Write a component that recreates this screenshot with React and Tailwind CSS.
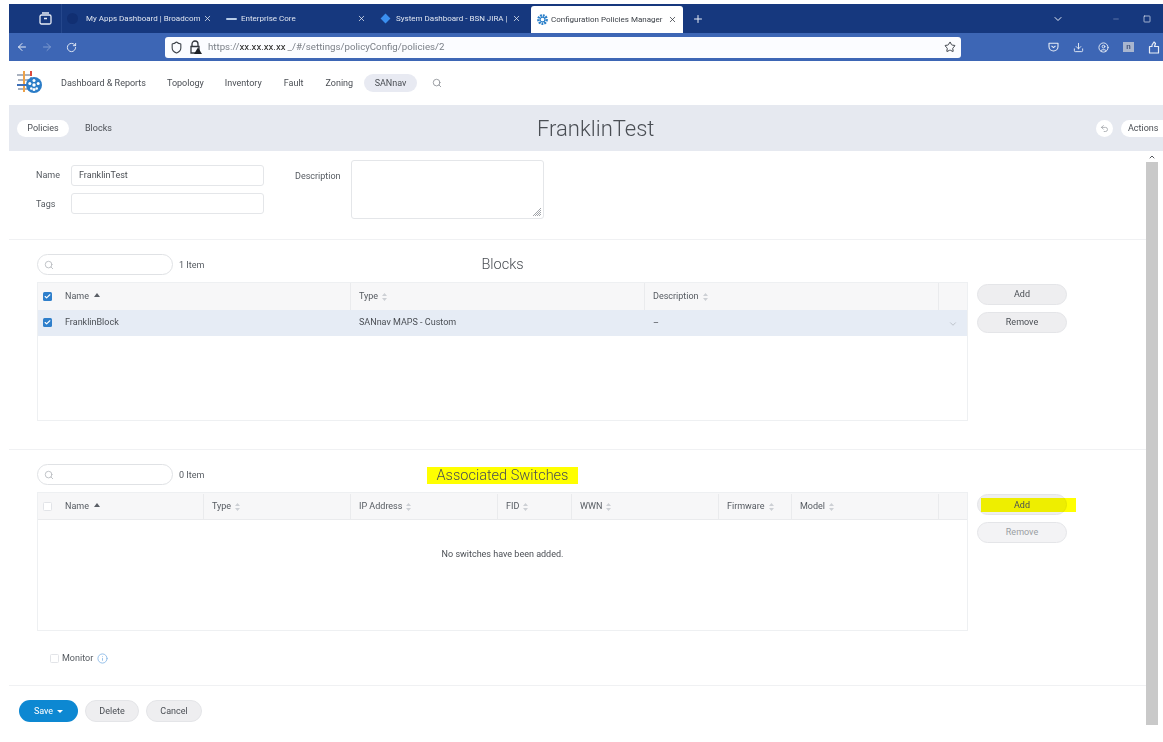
import { ArrowLeft, ArrowRight, RotateCw, Shield, Star, Download, CircleUser, X, Plus, ChevronDown, ChevronUp, Minus, Square, Search, Undo2, Check, Info } from 'lucide-react';

const Logo = () => (
    <svg width="26" height="24" viewBox="0 0 26 24" fill="none">
        <path d="M1 5h15M2 10h10M2 19h10M15 7v3" stroke="#8f99aa" strokeWidth="1.5" />
        <path d="M8 1v21" stroke="#eda24a" strokeWidth="2" />
        <path d="M15 1v5" stroke="#dd4b3e" strokeWidth="2" />
        <path d="M1 15h11" stroke="#3d6fb8" strokeWidth="2" />
        <circle cx="18" cy="15" r="8" fill="#2b7cc7" />
        <circle cx="18" cy="15" r="1.7" fill="#fff" />
        <circle cx="18" cy="10.5" r="1.5" fill="#fff" />
        <circle cx="18" cy="19.5" r="1.5" fill="#fff" />
        <circle cx="13.8" cy="13.5" r="1.5" fill="#fff" />
        <circle cx="22.2" cy="13.5" r="1.5" fill="#fff" />
        <circle cx="15.3" cy="18.5" r="1.3" fill="#fff" />
        <circle cx="20.7" cy="18.5" r="1.3" fill="#fff" />
    </svg>
);

const TabsIcon = () => (
    <svg width="13" height="13" viewBox="0 0 13 13" fill="none" stroke="#e8edf6" strokeWidth="1.3">
        <rect x="1" y="3" width="11" height="9" rx="1.5" />
        <path d="M3 1h7M5 6.5h3" />
    </svg>
);

const Gear = () => (
    <svg width="13" height="13" viewBox="0 0 14 14">
        <circle cx="7" cy="7" r="4.5" fill="none" stroke="#2a7fc9" strokeWidth="2.6" strokeDasharray="2 1" />
        <circle cx="7" cy="7" r="2.6" fill="none" stroke="#2a7fc9" strokeWidth="1.2" />
    </svg>
);

const WarnLock = () => (
    <svg width="13" height="14" viewBox="0 0 13 14" className="ml-[6px]" fill="none">
        <path d="M3 6V4a3 3 0 0 1 6 0v2" stroke="#33373d" strokeWidth="1.3" />
        <path d="M2 6.5h8V13H2z" stroke="#33373d" strokeWidth="1.3" />
        <path d="M9 7.5 13 14H5z" fill="#1f2226" />
    </svg>
);

const PocketIcon = () => (
    <svg width="11" height="10" viewBox="0 0 11 10" className="ml-[87px]" fill="none" stroke="#e8edf6" strokeWidth="1.1">
        <path d="M1 1.2h9v3.3a4.5 4.5 0 0 1-9 0z" strokeLinejoin="round" />
        <path d="M3.5 3.8 5.5 5.6l2-1.8" />
    </svg>
);

const ExtensionIcon = () => (
    <svg width="12" height="13" viewBox="0 0 12 13" className="ml-[14px]" fill="none" stroke="#e8edf6" strokeWidth="1.2" strokeLinejoin="round">
        <path d="M1.5 12V5.5h2.5V4L6 1l1.5 1.5L6.5 5.5h4V12z" />
    </svg>
);

const SortArrows = () => (
    <svg width="5" height="8" viewBox="0 0 5 8" className="ml-[4px] shrink-0" fill="#cdd0d5">
        <path d="M2.5 0 5 3H0zM2.5 8 0 5h5z" />
    </svg>
);

const SortUp = () => (
    <svg width="6" height="4" viewBox="0 0 6 4" className="ml-[5px] mb-[3px] shrink-0" fill="#5a5f66">
        <path d="M3 0 6 4H0z" />
    </svg>
);

const CheckBox = ({ checked }) => (
    <span className={`flex h-[9px] w-[9px] shrink-0 items-center justify-center rounded-[1.5px] ${checked ? 'bg-[#2f7fcb]' : 'border border-[#e2e4e8] bg-white'}`}>
        {checked && <Check size={7} strokeWidth={4} className="text-white" />}
    </span>
);

const HeaderCell = ({ width, label, sort = 'both', check }) => (
    <div style={{ width }} className="flex h-full shrink-0 items-center border-r border-[#eaebed] text-[9px] text-[#555a60] last:border-r-0">
        {check !== undefined && <span className="ml-[5px] mr-[13px]"><CheckBox checked={check} /></span>}
        {check === undefined && label && <span className="ml-[8px]" />}
        {label}
        {label && (sort === 'up' ? <SortUp /> : <SortArrows />)}
    </div>
);

const SearchBox = () => (
    <div className="flex h-[21px] w-[136px] items-center rounded-full border border-[#e0e2e5] bg-white pl-[6px]">
        <Search size={10} className="text-[#b4b8bd]" />
    </div>
);

const SectionHeader = ({ count, title, marked }) => (
    <div className="grid h-[21px] w-[931px] grid-cols-[1fr_auto_1fr] items-center">
        <div className="flex items-center gap-[6px]">
            <SearchBox />
            <span className="pt-[2px] text-[9px] text-[#555a60]">{count}</span>
        </div>
        <h2 className={`text-[14.5px] leading-[17px] font-light text-[#4a4e54] ${marked ? 'mt-[2px] bg-[#ffff00] px-[10px]' : ''}`}>{title}</h2>
        <div />
    </div>
);

const PillButton = ({ children, muted, marked }) => (
    <button className={`relative flex h-[21px] w-[90px] items-center justify-center rounded-full border border-[#e4e5e8] text-[9px] ${muted ? 'bg-[#f3f3f5] text-[#9a9ea3]' : 'bg-[#eeeef0] text-[#4a4e54]'} ${marked ? 'pt-[2px]' : ''}`}>
        {marked && <span className="absolute left-[3px] top-[3px] h-[14px] w-[95px] bg-[#ffff00] mix-blend-multiply" />}
        <span className="relative">{children}</span>
    </button>
);

const blockColumns = [
    { width: 313, label: 'Name', sort: 'up', check: true },
    { width: 294, label: 'Type' },
    { width: 294, label: 'Description' },
    { width: 30 },
];

const switchColumns = [
    { width: 166, label: 'Name', sort: 'up', check: false },
    { width: 147, label: 'Type' },
    { width: 147, label: 'IP Address' },
    { width: 74, label: 'FID' },
    { width: 147, label: 'WWN' },
    { width: 73, label: 'Firmware' },
    { width: 147, label: 'Model' },
    { width: 30 },
];

const Browser = () => (
    <div className="shrink-0 text-[#e8edf6]">
        <div className="flex h-[29px] items-center bg-[#16387e] text-[8px] whitespace-nowrap">
            <div className="flex h-full w-[53px] items-center justify-end border-r border-[#25478c] pr-[9px]"><TabsIcon /></div>
            <div className="flex w-[151px] items-center pl-[5px]">
                <span className="mr-[8px] h-[11px] w-[11px] rounded-full bg-[#112f72]" />
                <span className="w-[114px] text-[#dfe5f0]">My Apps Dashboard | Broadcom</span>
                <X size={9} className="ml-[3px] shrink-0" />
            </div>
            <div className="flex w-[153px] items-center pl-[13px]">
                <span className="mr-[4px] h-[2px] w-[11px] rounded bg-[#b8cde8]" />
                <span className="w-[116px] text-[#dfe5f0]">Enterprise Core</span>
                <X size={9} className="shrink-0" />
            </div>
            <div className="flex w-[165px] items-center pl-[16px]">
                <span className="mr-[7px] h-[7px] w-[7px] rotate-45 bg-[#3a8ff0]" />
                <span className="w-[116px] text-[#dfe5f0]">System Dashboard - BSN JIRA |</span>
                <X size={9} className="shrink-0" />
            </div>
            <div className="mt-[2px] flex h-[27px] w-[152px] items-center rounded-t-[3px] bg-white pl-[5px] text-[#3c4148]">
                <Gear />
                <span className="ml-[2px] w-[116px]">Configuration Policies Manager</span>
                <X size={9} className="ml-[1px] shrink-0 text-[#33373d]" />
            </div>
            <Plus size={12} className="ml-[9px]" />
            <ChevronDown size={12} className="ml-[348px]" />
            <Minus size={8} className="ml-[48px] text-[#7f93bd]" />
            <Square size={8} className="ml-[23px]" />
        </div>
        <div className="flex h-[28px] items-center bg-[#3d66b5]">
            <ArrowLeft size={12} className="ml-[7px]" />
            <ArrowRight size={12} className="ml-[13px] text-[#7f9bd0]" />
            <RotateCw size={11} className="ml-[13px]" />
            <div className="ml-[88px] flex h-[21px] w-[796px] items-center rounded-[3px] bg-[#fbfcff] pl-[5px] text-[9.7px] text-[#7a7f87]">
                <Shield size={13} className="text-[#3c4148]" />
                <WarnLock />
                <span className="ml-[6px]">https://</span>
                <span className="text-[#222]">xx.xx.xx.xx</span>
                <span className="ml-[2px]">_/#/settings/policyConfig/policies/2</span>
                <Star size={12} className="ml-auto mr-[5px] text-[#3c4148]" />
            </div>
            <PocketIcon />
            <Download size={11} className="ml-[14px]" />
            <CircleUser size={11} className="ml-[14px]" />
            <span className="ml-[14px] flex h-[10px] w-[11px] items-center justify-center bg-[#a9b6cf] text-[8px] font-bold leading-none text-[#4a5b80]">n</span>
            <ExtensionIcon />
        </div>
    </div>
);

export default function App() {
    return (
        <div className="h-[742px] w-[1163px] overflow-hidden bg-white pl-[9px] pt-[4px] font-['Roboto',sans-serif] blur-[0.35px]">
            <Browser />

            {/* app nav */}
            <div className="flex h-[44px] items-center text-[9px] text-[#4a4e54]">
                <span className="ml-[7px] -mt-[2px]"><Logo /></span>
                <span className="ml-[19px] pt-[2px]">Dashboard &amp; Reports</span>
                <span className="ml-[21px] pt-[2px]">Topology</span>
                <span className="ml-[21px] pt-[2px]">Inventory</span>
                <span className="ml-[22px] pt-[2px]">Fault</span>
                <span className="ml-[22px] pt-[2px]">Zoning</span>
                <span className="ml-[11px] flex h-[18px] items-center rounded-full bg-[#e8eaf2] px-[10.5px] pt-[1px]">SANnav</span>
                <Search size={10} className="ml-[15px] text-[#8a8e94]" />
            </div>

            {/* title bar */}
            <div className="relative flex h-[46px] items-center bg-[#e6e9f0] pl-[8px] text-[9px] text-[#4a4e54]">
                <span className="flex h-[17px] w-[52px] items-center justify-center rounded-full bg-white pt-[1px]">Policies</span>
                <span className="ml-[16px] pt-[2px]">Blocks</span>
                <h1 className="absolute left-[528px] text-[22px] font-light text-[#4a4e54]">FranklinTest</h1>
                <span className="ml-auto flex h-[17px] w-[17px] items-center justify-center rounded-full bg-white">
                    <Undo2 size={9} className="text-[#9a9ea3]" />
                </span>
                <span className="ml-[8px] flex h-[17px] w-[42px] items-center rounded-l-full bg-white pl-[7px] pt-[1px]">Actions</span>
            </div>

            <div className="flex">
                <div className="w-[1137px] shrink-0">
                    {/* form */}
                    <div className="flex h-[89px] border-b border-[#f0f1f3] pt-[9px] text-[9px] text-[#555a60]">
                        <div className="ml-[27px] mt-[5px] flex w-[228px] flex-col gap-[7px]">
                            <label className="flex items-center justify-between">
                                Name
                                <span className="flex h-[21px] w-[193px] items-center rounded-[3px] border border-[#e4e6e9] pl-[7px] text-[#4a4e54]">FranklinTest</span>
                            </label>
                            <label className="flex items-center justify-between">
                                <span className="pt-[2px]">Tags</span>
                                <span className="h-[21px] w-[193px] rounded-[3px] border border-[#e4e6e9]" />
                            </label>
                        </div>
                        <span className="ml-[31px] mt-[10px]">Description</span>
                        <div className="relative ml-[10px] h-[59px] w-[193px] rounded-[3px] border border-[#e4e6e9]">
                            <svg width="10" height="10" viewBox="0 0 10 10" className="absolute bottom-[1px] right-[1px]" stroke="#8a8e94" strokeWidth="0.8">
                                <path d="M9 1 1 9M9 3 3 9M9 5 5 9M9 7 7 9" />
                            </svg>
                        </div>
                    </div>

                    {/* blocks */}
                    <section className="h-[210px] border-b border-[#f0f1f3] pl-[28px] pt-[14px]">
                        <SectionHeader count="1 Item" title="Blocks" />
                        <div className="mt-[7px] flex items-start gap-[9px]">
                            <div className="h-[139px] w-[931px] border border-[#eef0f2]">
                                <div className="flex h-[27px] bg-[#f7f7f8]">
                                    {blockColumns.map((col, i) => <HeaderCell key={i} {...col} />)}
                                </div>
                                <div className="flex h-[26px] items-center bg-[#e6ecf5] pb-[1px] text-[9px] text-[#4a4e54]">
                                    <span className="ml-[5px] mr-[13px]"><CheckBox checked /></span>
                                    <span className="w-[294px]">FranklinBlock</span>
                                    <span className="w-[294px]">SANnav MAPS - Custom</span>
                                    <span className="pt-[3px]">–</span>
                                    <ChevronDown size={10} className="ml-auto mr-[9px] mt-[2px] text-[#b5bac2]" />
                                </div>
                            </div>
                            <div className="mt-[2px] flex flex-col gap-[7px]">
                                <PillButton>Add</PillButton>
                                <PillButton>Remove</PillButton>
                            </div>
                        </div>
                    </section>

                    {/* associated switches */}
                    <section className="h-[236px] border-b border-[#f0f1f3] pl-[28px] pt-[14px]">
                        <SectionHeader count="0 Item" title="Associated Switches" marked />
                        <div className="mt-[7px] flex items-start gap-[9px]">
                            <div className="h-[139px] w-[931px] border border-[#eef0f2]">
                                <div className="flex h-[27px] border-b border-[#eaebed] bg-[#f7f7f8] pt-[1px]">
                                    {switchColumns.map((col, i) => <HeaderCell key={i} {...col} />)}
                                </div>
                                <p className="pt-[28px] text-center text-[9px] text-[#4a4e54]">No switches have been added.</p>
                            </div>
                            <div className="mt-[2px] flex flex-col gap-[7px]">
                                <PillButton marked>Add</PillButton>
                                <PillButton muted>Remove</PillButton>
                            </div>
                        </div>
                        <div className="ml-[13px] mt-[21px] flex items-center text-[9px] text-[#555a60]">
                            <CheckBox />
                            <span className="ml-[3px]">Monitor</span>
                            <Info size={11} className="ml-[4px] text-[#8dbbe8]" />
                        </div>
                    </section>

                    {/* footer buttons */}
                    <div className="flex gap-[7px] pl-[10px] pt-[14px] text-[9px]">
                        <button className="flex h-[22px] w-[59px] items-center justify-center gap-[4px] rounded-full bg-[#0d88d2] pt-[1px] text-white">
                            Save
                            <svg width="6" height="3" viewBox="0 0 6 3" fill="#fff"><path d="M0 0h6L3 3z" /></svg>
                        </button>
                        <button className="h-[22px] w-[54px] rounded-full border border-[#e4e5e8] bg-[#eeeef0] pt-[1px] text-[#4a4e54]">Delete</button>
                        <button className="h-[22px] w-[56px] rounded-full border border-[#e4e5e8] bg-[#eeeef0] pt-[1px] text-[#4a4e54]">Cancel</button>
                    </div>
                </div>

                {/* scrollbar */}
                <div className="h-[574px] w-[12px] shrink-0">
                    <div className="flex h-[11px] items-center justify-center"><ChevronUp size={8} strokeWidth={3} className="text-[#55595f]" /></div>
                    <div className="h-[563px] bg-[#c9c9c9]" />
                </div>
            </div>
        </div>
    );
}
